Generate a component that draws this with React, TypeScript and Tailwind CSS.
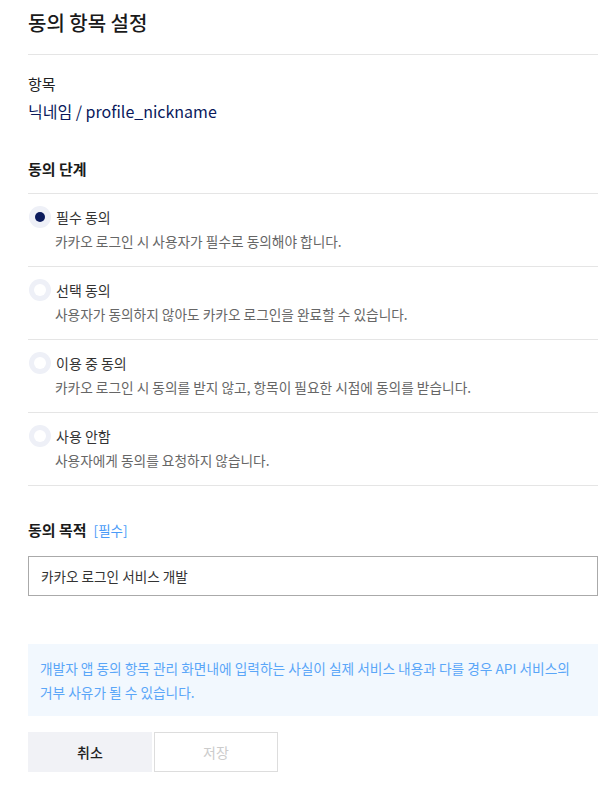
const options = [
  { title: "필수 동의", desc: "카카오 로그인 시 사용자가 필수로 동의해야 합니다.", checked: true },
  { title: "선택 동의", desc: "사용자가 동의하지 않아도 카카오 로그인을 완료할 수 있습니다.", checked: false },
  { title: "이용 중 동의", desc: "카카오 로그인 시 동의를 받지 않고, 항목이 필요한 시점에 동의를 받습니다.", checked: false },
  { title: "사용 안함", desc: "사용자에게 동의를 요청하지 않습니다.", checked: false },
];

function Radio({ checked }: { checked: boolean }) {
  return (
    <span className="flex h-[22px] w-[22px] shrink-0 items-center justify-center rounded-full bg-[#eef0f7]">
      {checked ? (
        <span className="h-[10px] w-[10px] rounded-full bg-[#0a1a5c]" />
      ) : (
        <span className="h-[12px] w-[12px] rounded-full bg-white" />
      )}
    </span>
  );
}

export default function App() {
  return (
    <div className="min-h-screen bg-white font-['Noto_Sans_CJK_KR','Noto_Sans',sans-serif] text-[#222]">
      <div className="ml-[28px] w-[570px]">
        <h1 className="pt-[8px] pb-[16px] text-[20px] font-medium leading-[30px] text-[#1a1a1a]">동의 항목 설정</h1>
        <div className="border-t border-[#e5e5e5]" />

        <div className="pt-[18px]">
          <p className="text-[15px] leading-[22px] text-[#222]">항목</p>
          <p className="mt-[3px] text-[16px] leading-[26px] text-[#0a1a5c]">닉네임 / profile_nickname</p>
        </div>

        <h2 className="mt-[34px] pb-[13px] text-[15px] font-bold leading-[22px] text-[#1a1a1a]">동의 단계</h2>
        <div className="border-t border-[#e5e5e5]">
          {options.map((o) => (
            <div key={o.title} className="border-b border-[#e5e5e5] pt-[12px] pb-[14px]">
              <div className="flex items-center gap-[5px] pl-[1px]">
                <Radio checked={o.checked} />
                <span className="text-[14px] leading-[22px] text-[#333]">{o.title}</span>
              </div>
              <p className="mt-[2px] pl-[27px] text-[13.7px] leading-[22px] text-[#666]">{o.desc}</p>
            </div>
          ))}
        </div>

        <div className="mt-[32px] flex items-baseline gap-[7px]">
          <span className="text-[15px] font-bold leading-[24px] text-[#1a1a1a]">동의 목적</span>
          <span className="text-[13.5px] text-[#4a9bf7]">[필수]</span>
        </div>
        <div className="mt-[14px] flex h-[40px] items-center border border-[#aaa] px-[12px] text-[13.6px] text-[#333]">
          카카오 로그인 서비스 개발
        </div>

        <div className="mt-[48px] bg-[#f2f8fe] py-[12px] pl-[12px] pr-[24px] text-[13.7px] leading-[24px] text-[#5aa6f8]">
          개발자 앱 동의 항목 관리 화면내에 입력하는 사실이 실제 서비스 내용과 다를 경우 API 서비스의 거부 사유가 될 수 있습니다.
        </div>

        <div className="mt-[16px] flex gap-[2px]">
          <button className="h-[40px] w-[124px] bg-[#f1f2f6] text-[14px] font-medium text-[#222]">취소</button>
          <button className="h-[40px] w-[124px] border border-[#ddd] bg-white text-[14px] text-[#ccc]">저장</button>
        </div>
      </div>
    </div>
  );
}
